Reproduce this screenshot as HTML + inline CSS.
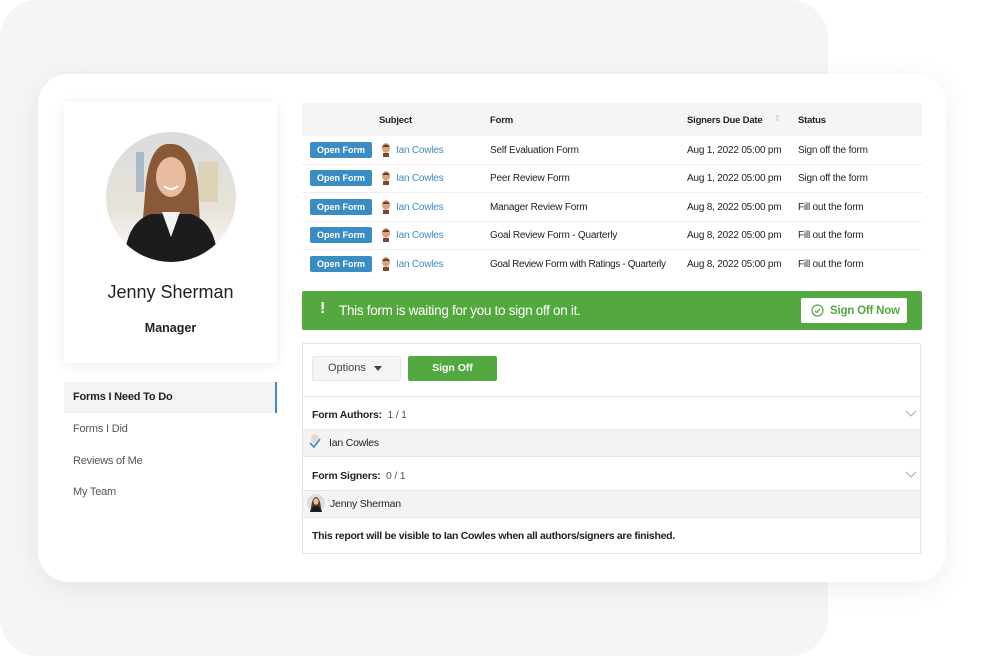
<!DOCTYPE html>
<html><head><meta charset="utf-8">
<style>
*{margin:0;padding:0;box-sizing:border-box}
body{width:984px;height:656px;background:#fff;position:relative;overflow:hidden;font-family:"Liberation Sans",sans-serif;color:#222}
.a{position:absolute}
.bg{left:0;top:0;width:828px;height:656px;background:#f4f5f7;border-radius:38px}
.card{left:38px;top:74px;width:908px;height:508px;background:#fff;border-radius:30px;box-shadow:0 6px 30px rgba(0,0,0,.07)}
.prof{left:64px;top:102px;width:213px;height:261px;background:#fff;box-shadow:0 2px 12px rgba(0,0,0,.08)}
.t{font-size:10px;letter-spacing:-.2px;white-space:nowrap}
.btn{width:62px;height:16px;background:#3a8dc4;border-radius:2px;color:#fff;font-size:9px;font-weight:bold;text-align:center;line-height:16px}
.nav{font-size:11px;color:#555;letter-spacing:-.2px}
.face{width:12px;height:14px}
</style></head><body>
<div class="a bg"></div>
<div class="a card"></div>
<div class="a prof"></div>
<svg class="a" style="left:106px;top:132px" width="130" height="130" viewBox="0 0 130 130">
<defs><clipPath id="c"><circle cx="65" cy="65" r="65"/></clipPath>
<linearGradient id="g" x1="0" y1="0" x2="0" y2="1"><stop offset="0" stop-color="#d9dcdf"/><stop offset=".6" stop-color="#e8e3d8"/><stop offset="1" stop-color="#fff"/></linearGradient></defs>
<g clip-path="url(#c)">
<rect width="130" height="130" fill="url(#g)"/>
<rect x="30" y="20" width="8" height="40" fill="#8aa0c0" opacity=".6"/>
<rect x="92" y="30" width="20" height="40" fill="#d8c9a0" opacity=".6"/>
<path d="M40 50 Q45 10 65 12 Q88 12 92 55 L95 110 L35 110 Z" fill="#8a5a38"/>
<path d="M18 130 Q20 90 45 82 L85 82 Q110 90 112 130 Z" fill="#1c1c1e"/>
<path d="M56 80 L65 105 L74 80 Z" fill="#f4f4f4"/>
<ellipse cx="65" cy="45" rx="15" ry="20" fill="#e9bca0"/>
<path d="M58 54 Q65 60 72 54" stroke="#fff" stroke-width="2" fill="none"/>
</g></svg>
<div class="a" style="left:64px;top:282px;width:213px;text-align:center;font-size:18px;color:#222">Jenny Sherman</div>
<div class="a" style="left:64px;top:321px;width:213px;text-align:center;font-size:12.5px;font-weight:bold;color:#222">Manager</div>
<div class="a" style="left:64px;top:382px;width:213px;height:31px;background:#f4f4f4;border-right:2px solid #3a8dc4"></div>
<div class="a nav" style="left:73px;top:391px;font-weight:bold;color:#222">Forms I Need To Do</div>
<div class="a nav" style="left:73px;top:423px">Forms I Did</div>
<div class="a nav" style="left:73px;top:455px">Reviews of Me</div>
<div class="a nav" style="left:73px;top:486px">My Team</div>

<div class="a" style="left:302px;top:103px;width:620px;height:33px;background:#f5f5f5"></div>
<div class="a t" style="left:379px;top:115px;font-weight:bold;font-size:9.5px">Subject</div>
<div class="a t" style="left:490px;top:115px;font-weight:bold;font-size:9.5px">Form</div>
<div class="a t" style="left:687px;top:115px;font-weight:bold;font-size:9.5px">Signers Due Date</div>
<div class="a t" style="left:774px;top:114px;font-size:8px;color:#ccc">⇕</div>
<div class="a t" style="left:798px;top:115px;font-weight:bold;font-size:9.5px">Status</div>

<div class="a" style="left:302px;top:164px;width:620px;height:1px;background:#eee"></div>
<div class="a" style="left:302px;top:192px;width:620px;height:1px;background:#eee"></div>
<div class="a" style="left:302px;top:221px;width:620px;height:1px;background:#eee"></div>
<div class="a" style="left:302px;top:249px;width:620px;height:1px;background:#eee"></div>

<div class="a btn" style="left:310px;top:142px">Open Form</div>
<div class="a btn" style="left:310px;top:170px">Open Form</div>
<div class="a btn" style="left:310px;top:199px">Open Form</div>
<div class="a btn" style="left:310px;top:227px">Open Form</div>
<div class="a btn" style="left:310px;top:256px">Open Form</div>
<svg width="0" height="0" style="position:absolute"><defs><g id="f"><ellipse cx="6" cy="5" rx="4" ry="5" fill="#d9a27e"/><path d="M2 4 Q6 -1 10 4" fill="#6b3a22"/><rect x="3" y="10" width="6" height="4" fill="#7a4a30"/></g></defs></svg>
<svg class="a face" style="left:380px;top:143px"><use href="#f"/></svg>
<svg class="a face" style="left:380px;top:171px"><use href="#f"/></svg>
<svg class="a face" style="left:380px;top:200px"><use href="#f"/></svg>
<svg class="a face" style="left:380px;top:228px"><use href="#f"/></svg>
<svg class="a face" style="left:380px;top:257px"><use href="#f"/></svg>
<div class="a t" style="left:396px;top:145px;color:#3a8dc4">Ian Cowles</div>
<div class="a t" style="left:396px;top:173px;color:#3a8dc4">Ian Cowles</div>
<div class="a t" style="left:396px;top:202px;color:#3a8dc4">Ian Cowles</div>
<div class="a t" style="left:396px;top:230px;color:#3a8dc4">Ian Cowles</div>
<div class="a t" style="left:396px;top:259px;color:#3a8dc4">Ian Cowles</div>
<div class="a t" style="left:490px;top:145px">Self Evaluation Form</div>
<div class="a t" style="left:490px;top:173px">Peer Review Form</div>
<div class="a t" style="left:490px;top:202px">Manager Review Form</div>
<div class="a t" style="left:490px;top:230px">Goal Review Form - Quarterly</div>
<div class="a t" style="left:490px;top:259px;letter-spacing:-.35px">Goal Review Form with Ratings - Quarterly</div>
<div class="a t" style="left:687px;top:145px">Aug 1, 2022 05:00 pm</div>
<div class="a t" style="left:687px;top:173px">Aug 1, 2022 05:00 pm</div>
<div class="a t" style="left:687px;top:202px">Aug 8, 2022 05:00 pm</div>
<div class="a t" style="left:687px;top:230px">Aug 8, 2022 05:00 pm</div>
<div class="a t" style="left:687px;top:259px">Aug 8, 2022 05:00 pm</div>
<div class="a t" style="left:798px;top:145px">Sign off the form</div>
<div class="a t" style="left:798px;top:173px">Sign off the form</div>
<div class="a t" style="left:798px;top:202px">Fill out the form</div>
<div class="a t" style="left:798px;top:230px">Fill out the form</div>
<div class="a t" style="left:798px;top:259px">Fill out the form</div>

<div class="a" style="left:302px;top:291px;width:620px;height:39px;background:#53a93f;border-radius:2px"></div>
<div class="a" style="left:320px;top:300px;color:#fff;font-size:16px;font-weight:bold">!</div>
<div class="a" style="left:339px;top:303px;color:#fff;font-size:13.5px;letter-spacing:-.3px">This form is waiting for you to sign off on it.</div>
<div class="a" style="left:801px;top:298px;width:106px;height:25px;background:#fff;border-radius:2px"></div>
<svg class="a" style="left:811px;top:304px" width="13" height="13" viewBox="0 0 13 13"><circle cx="6.5" cy="6.5" r="5.5" fill="none" stroke="#53a93f" stroke-width="1.2"/><path d="M4 6.7 L5.9 8.5 L9 4.8" fill="none" stroke="#53a93f" stroke-width="1.2"/></svg>
<div class="a" style="left:830px;top:305px;color:#53a93f;font-size:11.5px;font-weight:bold;letter-spacing:-.2px">Sign Off Now</div>

<div class="a" style="left:302px;top:343px;width:619px;height:211px;border:1px solid #e6e6e6;background:#fff"></div>
<div class="a" style="left:312px;top:356px;width:89px;height:25px;background:#f5f5f5;border:1px solid #e8e8e8;border-radius:2px"></div>
<div class="a" style="left:328px;top:362px;font-size:11px;color:#444">Options</div>
<div class="a" style="left:374px;top:366px;width:0;height:0;border-left:4px solid transparent;border-right:4px solid transparent;border-top:5px solid #444"></div>
<div class="a" style="left:408px;top:356px;width:89px;height:25px;background:#53a93f;border-radius:2px;color:#fff;font-size:10.5px;font-weight:bold;text-align:center;line-height:25px">Sign Off</div>
<div class="a" style="left:303px;top:396px;width:617px;height:1px;background:#e6e6e6"></div>
<div class="a t" style="left:312px;top:409px;font-size:10.5px;font-weight:bold">Form Authors: <span style="font-weight:normal;color:#555">&nbsp;1 / 1</span></div>
<svg class="a" style="left:905px;top:410px" width="12" height="8"><path d="M1 1 L6 6 L11 1" fill="none" stroke="#aaa" stroke-width="1"/></svg>
<div class="a" style="left:303px;top:429px;width:617px;height:28px;background:#f3f3f3;border-top:1px solid #e6e6e6;border-bottom:1px solid #e6e6e6"></div>
<svg class="a" style="left:308px;top:433px" width="14" height="18"><ellipse cx="7" cy="6" rx="4" ry="5" fill="#e5d9d2"/><path d="M2 10 L6 14 L12 6" fill="none" stroke="#3a8dc4" stroke-width="1.6"/></svg>
<div class="a t" style="left:329px;top:437px;font-size:10.5px">Ian Cowles</div>
<div class="a t" style="left:312px;top:470px;font-size:10.5px;font-weight:bold">Form Signers: <span style="font-weight:normal;color:#555">&nbsp;0 / 1</span></div>
<svg class="a" style="left:905px;top:471px" width="12" height="8"><path d="M1 1 L6 6 L11 1" fill="none" stroke="#aaa" stroke-width="1"/></svg>
<div class="a" style="left:303px;top:490px;width:617px;height:28px;background:#f3f3f3;border-top:1px solid #e6e6e6;border-bottom:1px solid #e6e6e6"></div>
<svg class="a" style="left:307px;top:494px" width="18" height="18" viewBox="0 0 18 18"><circle cx="9" cy="9" r="9" fill="#ddd"/><path d="M4 18 Q4 4 9 3 Q14 4 14 18Z" fill="#5a3a26"/><path d="M3 18 Q4 12 9 12 Q14 12 15 18Z" fill="#1c1c1e"/><ellipse cx="9" cy="7.5" rx="2.6" ry="3.2" fill="#e9bca0"/></svg>
<div class="a t" style="left:330px;top:498px;font-size:10.5px">Jenny Sherman</div>
<div class="a t" style="left:312px;top:530px;font-size:10.5px;font-weight:bold;letter-spacing:-.3px">This report will be visible to Ian Cowles when all authors/signers are finished.</div>
</body></html>
